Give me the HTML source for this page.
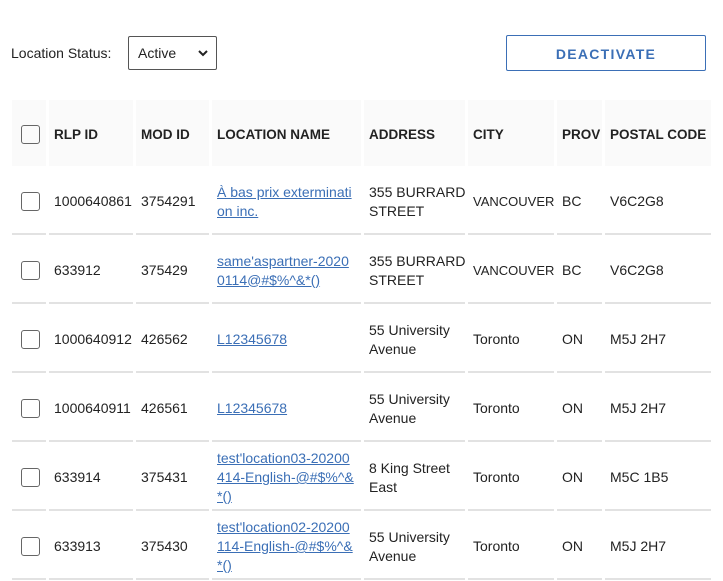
<!DOCTYPE html>
<html><head><style>
body{margin:0;background:#fff;font-family:"Liberation Sans",sans-serif;color:#222;font-size:14px;width:723px;height:581px;overflow:hidden;position:relative}
.lbl{position:absolute;left:11px;top:45px;font-size:14px}
.sel{position:absolute;left:128px;top:36px;width:89px;height:34px;border:1px solid #555;border-radius:2px;box-sizing:border-box;font-size:14px;padding:8px 0 0 9px}
.sel svg{position:absolute;right:8px;top:13px}
.btn{position:absolute;left:506px;top:35px;width:200px;height:36px;border:1px solid #3b6fb6;border-radius:2px;box-sizing:border-box;color:#3b6fb6;font-weight:bold;font-size:14px;letter-spacing:1.3px;text-align:center;line-height:36px}
table{position:absolute;left:9px;top:100px;width:705px;border-collapse:separate;border-spacing:3px 0;table-layout:fixed}
th{background:#fafafa;height:66px;text-align:left;font-size:13.5px;padding:3px 0 0 5px;box-sizing:border-box;white-space:nowrap;overflow:hidden}
td{height:69px;border-bottom:2px solid #e2e2e2;padding:4px 0 0 5px;box-sizing:border-box;line-height:19px;vertical-align:middle;white-space:nowrap;overflow:hidden}
a{color:#3b6fb6;text-decoration:underline}
.s{font-size:13px}
.cb{display:inline-block;width:19px;height:19px;border:1px solid #666;border-radius:3px;box-sizing:border-box;margin-left:4px;vertical-align:middle}
</style></head><body>
<div class="lbl">Location Status:</div>
<div class="sel">Active<svg width="10" height="7" viewBox="0 0 10 7"><path d="M1 1l4 4 4-4" stroke="#222" stroke-width="2" fill="none"/></svg></div>
<div class="btn">DEACTIVATE</div>
<table>
<colgroup><col style="width:34px"><col style="width:84px"><col style="width:73px"><col style="width:149px"><col style="width:101px"><col style="width:86px"><col style="width:45px"><col style="width:106px"></colgroup>
<tr><th><span class="cb"></span></th><th>RLP ID</th><th>MOD ID</th><th>LOCATION NAME</th><th>ADDRESS</th><th>CITY</th><th>PROV</th><th>POSTAL CODE</th></tr>
<tr><td><span class="cb"></span></td><td>1000640861</td><td>3754291</td><td><a>À bas prix exterminati<br>on inc.</a></td><td>355 BURRARD<br>STREET</td><td class="s">VANCOUVER</td><td>BC</td><td>V6C2G8</td></tr>
<tr><td><span class="cb"></span></td><td>633912</td><td>375429</td><td><a>same'aspartner-2020<br>0114@#$%^&amp;*()</a></td><td>355 BURRARD<br>STREET</td><td class="s">VANCOUVER</td><td>BC</td><td>V6C2G8</td></tr>
<tr><td><span class="cb"></span></td><td>1000640912</td><td>426562</td><td><a>L12345678</a></td><td>55 University<br>Avenue</td><td>Toronto</td><td>ON</td><td>M5J 2H7</td></tr>
<tr><td><span class="cb"></span></td><td>1000640911</td><td>426561</td><td><a>L12345678</a></td><td>55 University<br>Avenue</td><td>Toronto</td><td>ON</td><td>M5J 2H7</td></tr>
<tr><td><span class="cb"></span></td><td>633914</td><td>375431</td><td><a>test'location03-20200<br>414-English-@#$%^&amp;<br>*()</a></td><td>8 King Street<br>East</td><td>Toronto</td><td>ON</td><td>M5C 1B5</td></tr>
<tr><td><span class="cb"></span></td><td>633913</td><td>375430</td><td><a>test'location02-20200<br>114-English-@#$%^&amp;<br>*()</a></td><td>55 University<br>Avenue</td><td>Toronto</td><td>ON</td><td>M5J 2H7</td></tr>
</table>
</body></html>
